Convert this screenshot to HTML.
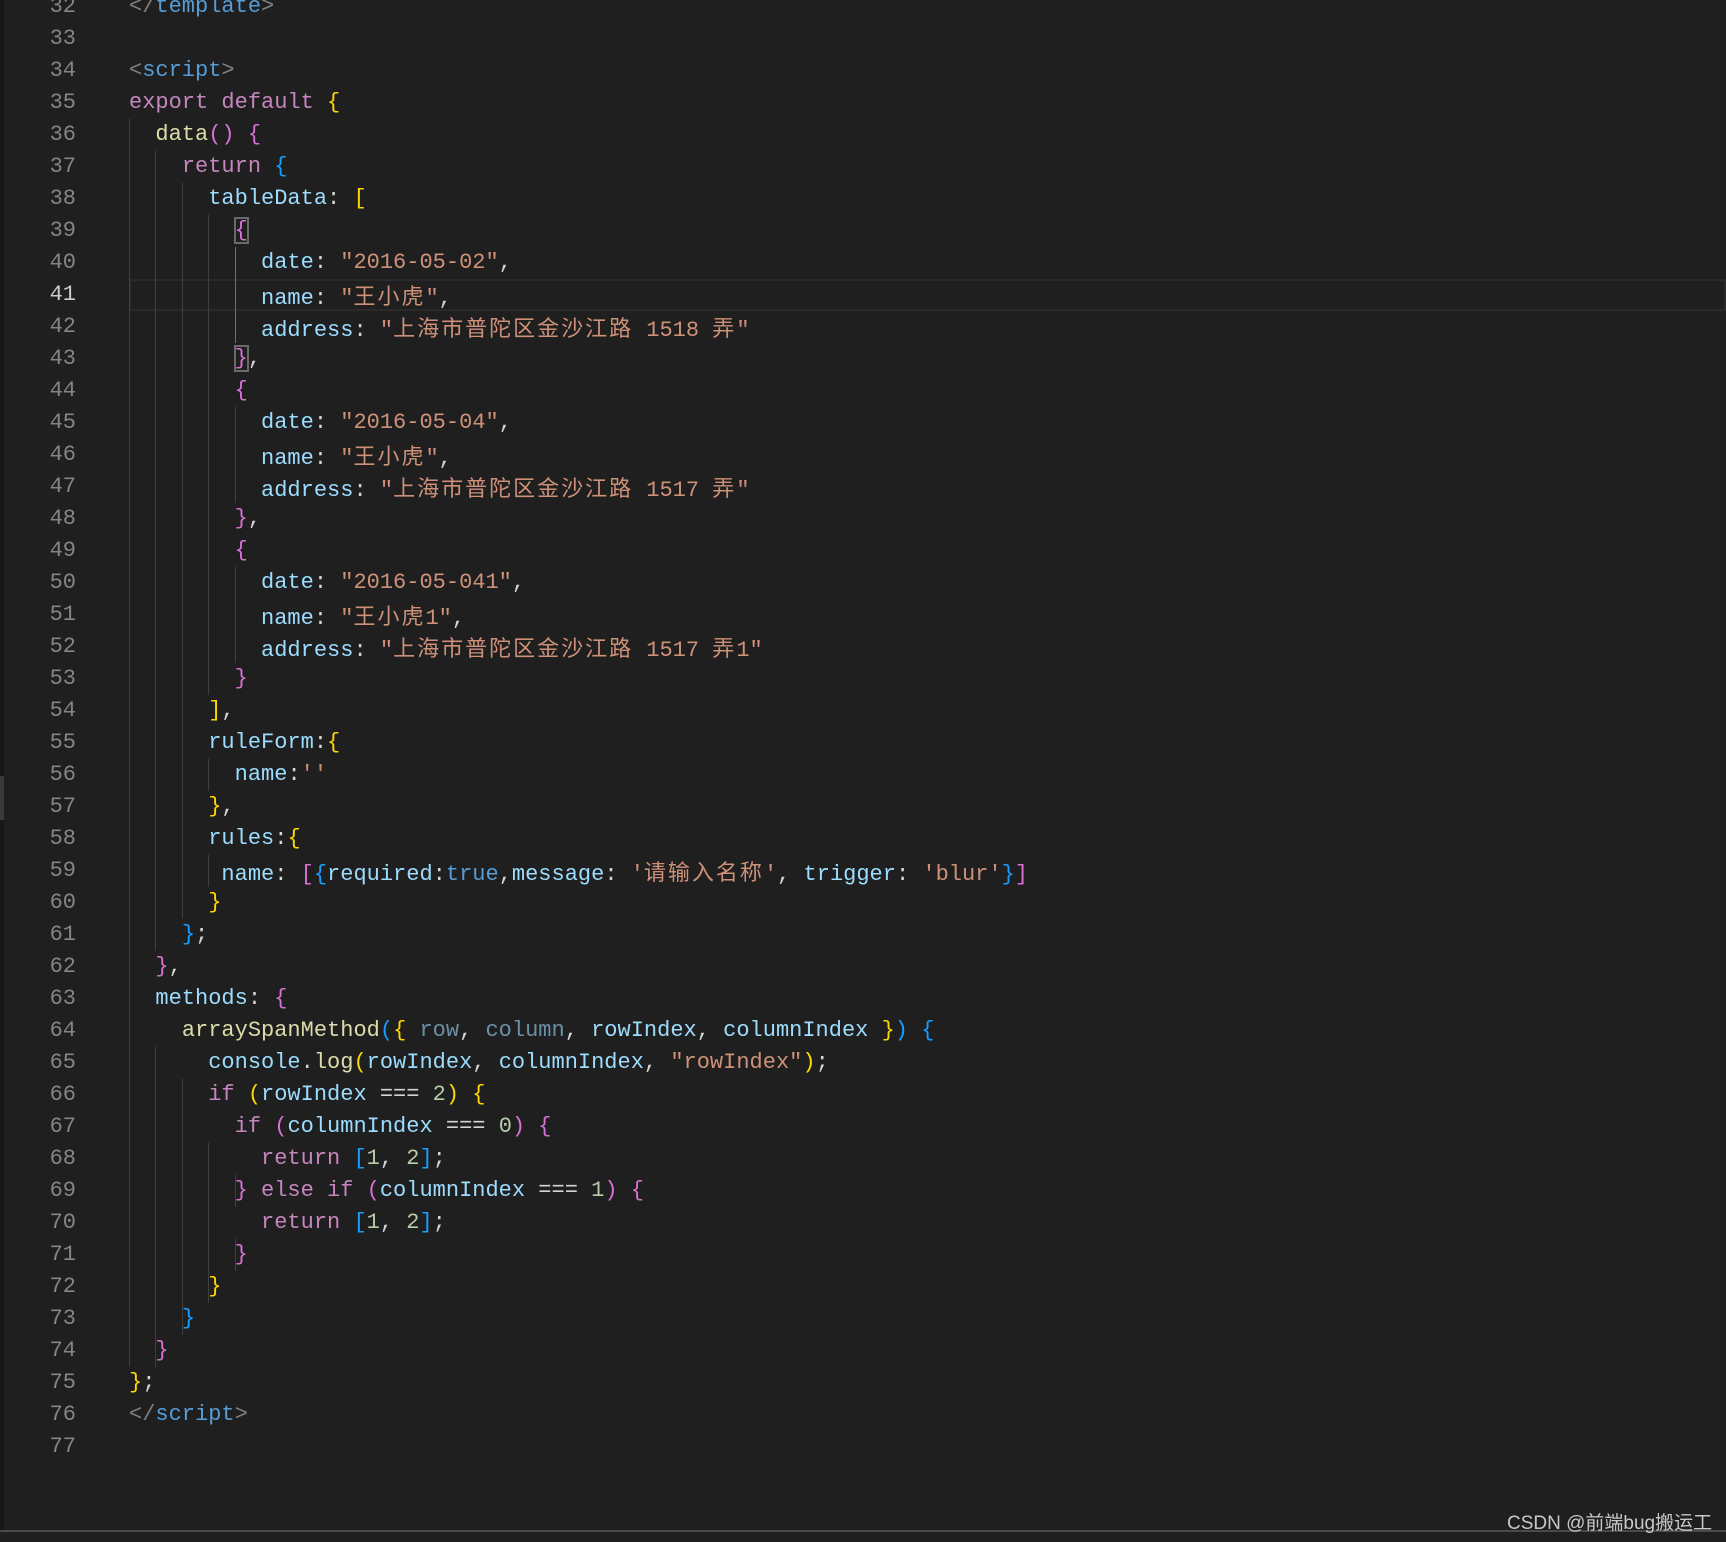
<!DOCTYPE html>
<html><head><meta charset="utf-8"><style>
html,body{margin:0;padding:0;}
body{width:1726px;height:1542px;background:#1f1f1f;position:relative;overflow:hidden;font-family:"Liberation Mono","Noto Sans CJK SC",monospace;font-size:22px;}
.ln{position:absolute;left:0;width:76px;text-align:right;height:32px;line-height:32px;color:#858585;white-space:pre;}
.ln.a{color:#cccccc;}
.cd{position:absolute;left:129px;height:32px;line-height:32px;color:#d4d4d4;white-space:pre;}
.g{position:absolute;width:1px;background:#404040;}
.g.a{background:#707070;}
.k{color:#c586c0}.t{color:#569cd6}.p{color:#808080}.v{color:#9cdcfe}.s{color:#ce9178}.f{color:#dcdcaa}.n{color:#b5cea8}
.y{color:#ffd700}.m{color:#da70d6}.b{color:#179fff}.d{color:#9cdcfe;opacity:.6}
.c{letter-spacing:2px;font-family:"Noto Sans CJK SC",sans-serif;}
.box{outline:2px solid #6a6a6a;outline-offset:-1px;}
</style></head><body>
<div style="position:absolute;left:0;top:0;width:4px;height:1530px;background:#181818"></div>
<div style="position:absolute;left:0;top:776px;width:4px;height:44px;background:#3a3a3a"></div>
<div style="position:absolute;left:129px;top:279px;right:0;height:32px;box-sizing:border-box;border:2px solid #2a2a2a"></div>
<div style="position:absolute;left:0;top:1530px;width:1726px;height:2px;background:#4a4a4a"></div>
<div style="position:absolute;left:1507px;top:1508px;font-family:'Liberation Sans','Noto Sans CJK SC',sans-serif;font-size:19px;color:#c8c8c8;white-space:pre">CSDN @前端bug搬运工</div>

<!-- guides -->
<div class="g" style="left:129px;top:119px;height:1248px"></div>
<div class="g" style="left:155px;top:151px;height:800px"></div>
<div class="g" style="left:155px;top:1047px;height:320px"></div>
<div class="g" style="left:182px;top:183px;height:736px"></div>
<div class="g" style="left:182px;top:1079px;height:256px"></div>
<div class="g" style="left:208px;top:215px;height:480px"></div>
<div class="g" style="left:208px;top:759px;height:32px"></div>
<div class="g" style="left:208px;top:855px;height:32px"></div>
<div class="g" style="left:208px;top:1143px;height:160px"></div>
<div class="g a" style="left:235px;top:247px;height:96px"></div>
<div class="g" style="left:235px;top:407px;height:96px"></div>
<div class="g" style="left:235px;top:567px;height:96px"></div>
<div class="g" style="left:235px;top:1175px;height:32px"></div>
<div class="g" style="left:235px;top:1239px;height:32px"></div>

<div class="ln" style="top:-9px">32</div><div class="cd" style="top:-9px"><span class="p">&lt;/</span><span class="t">template</span><span class="p">&gt;</span></div>
<div class="ln" style="top:23px">33</div>
<div class="ln" style="top:55px">34</div><div class="cd" style="top:55px"><span class="p">&lt;</span><span class="t">script</span><span class="p">&gt;</span></div>
<div class="ln" style="top:87px">35</div><div class="cd" style="top:87px"><span class="k">export default</span> <span class="y">{</span></div>
<div class="ln" style="top:119px">36</div><div class="cd" style="top:119px">  <span class="f">data</span><span class="m">()</span> <span class="m">{</span></div>
<div class="ln" style="top:151px">37</div><div class="cd" style="top:151px">    <span class="k">return</span> <span class="b">{</span></div>
<div class="ln" style="top:183px">38</div><div class="cd" style="top:183px">      <span class="v">tableData</span>: <span class="y">[</span></div>
<div class="ln" style="top:215px">39</div><div class="cd" style="top:215px">        <span class="m box">{</span></div>
<div class="ln" style="top:247px">40</div><div class="cd" style="top:247px">          <span class="v">date</span>: <span class="s">"2016-05-02"</span>,</div>
<div class="ln a" style="top:279px">41</div><div class="cd" style="top:279px">          <span class="v">name</span>: <span class="s">"<span class="c">王小虎</span>"</span>,</div>
<div class="ln" style="top:311px">42</div><div class="cd" style="top:311px">          <span class="v">address</span>: <span class="s">"<span class="c">上海市普陀区金沙江路</span> 1518 <span class="c">弄</span>"</span></div>
<div class="ln" style="top:343px">43</div><div class="cd" style="top:343px">        <span class="m box">}</span>,</div>
<div class="ln" style="top:375px">44</div><div class="cd" style="top:375px">        <span class="m">{</span></div>
<div class="ln" style="top:407px">45</div><div class="cd" style="top:407px">          <span class="v">date</span>: <span class="s">"2016-05-04"</span>,</div>
<div class="ln" style="top:439px">46</div><div class="cd" style="top:439px">          <span class="v">name</span>: <span class="s">"<span class="c">王小虎</span>"</span>,</div>
<div class="ln" style="top:471px">47</div><div class="cd" style="top:471px">          <span class="v">address</span>: <span class="s">"<span class="c">上海市普陀区金沙江路</span> 1517 <span class="c">弄</span>"</span></div>
<div class="ln" style="top:503px">48</div><div class="cd" style="top:503px">        <span class="m">}</span>,</div>
<div class="ln" style="top:535px">49</div><div class="cd" style="top:535px">        <span class="m">{</span></div>
<div class="ln" style="top:567px">50</div><div class="cd" style="top:567px">          <span class="v">date</span>: <span class="s">"2016-05-041"</span>,</div>
<div class="ln" style="top:599px">51</div><div class="cd" style="top:599px">          <span class="v">name</span>: <span class="s">"<span class="c">王小虎</span>1"</span>,</div>
<div class="ln" style="top:631px">52</div><div class="cd" style="top:631px">          <span class="v">address</span>: <span class="s">"<span class="c">上海市普陀区金沙江路</span> 1517 <span class="c">弄</span>1"</span></div>
<div class="ln" style="top:663px">53</div><div class="cd" style="top:663px">        <span class="m">}</span></div>
<div class="ln" style="top:695px">54</div><div class="cd" style="top:695px">      <span class="y">]</span>,</div>
<div class="ln" style="top:727px">55</div><div class="cd" style="top:727px">      <span class="v">ruleForm</span>:<span class="y">{</span></div>
<div class="ln" style="top:759px">56</div><div class="cd" style="top:759px">        <span class="v">name</span>:<span class="s">''</span></div>
<div class="ln" style="top:791px">57</div><div class="cd" style="top:791px">      <span class="y">}</span>,</div>
<div class="ln" style="top:823px">58</div><div class="cd" style="top:823px">      <span class="v">rules</span>:<span class="y">{</span></div>
<div class="ln" style="top:855px">59</div><div class="cd" style="top:855px">       <span class="v">name</span>: <span class="m">[</span><span class="b">{</span><span class="v">required</span>:<span class="t">true</span>,<span class="v">message</span>: <span class="s">'<span class="c">请输入名称</span>'</span>, <span class="v">trigger</span>: <span class="s">'blur'</span><span class="b">}</span><span class="m">]</span></div>
<div class="ln" style="top:887px">60</div><div class="cd" style="top:887px">      <span class="y">}</span></div>
<div class="ln" style="top:919px">61</div><div class="cd" style="top:919px">    <span class="b">}</span>;</div>
<div class="ln" style="top:951px">62</div><div class="cd" style="top:951px">  <span class="m">}</span>,</div>
<div class="ln" style="top:983px">63</div><div class="cd" style="top:983px">  <span class="v">methods</span>: <span class="m">{</span></div>
<div class="ln" style="top:1015px">64</div><div class="cd" style="top:1015px">    <span class="f">arraySpanMethod</span><span class="b">(</span><span class="y">{</span> <span class="d">row</span>, <span class="d">column</span>, <span class="v">rowIndex</span>, <span class="v">columnIndex</span> <span class="y">}</span><span class="b">)</span> <span class="b">{</span></div>
<div class="ln" style="top:1047px">65</div><div class="cd" style="top:1047px">      <span class="v">console</span>.<span class="f">log</span><span class="y">(</span><span class="v">rowIndex</span>, <span class="v">columnIndex</span>, <span class="s">"rowIndex"</span><span class="y">)</span>;</div>
<div class="ln" style="top:1079px">66</div><div class="cd" style="top:1079px">      <span class="k">if</span> <span class="y">(</span><span class="v">rowIndex</span> === <span class="n">2</span><span class="y">)</span> <span class="y">{</span></div>
<div class="ln" style="top:1111px">67</div><div class="cd" style="top:1111px">        <span class="k">if</span> <span class="m">(</span><span class="v">columnIndex</span> === <span class="n">0</span><span class="m">)</span> <span class="m">{</span></div>
<div class="ln" style="top:1143px">68</div><div class="cd" style="top:1143px">          <span class="k">return</span> <span class="b">[</span><span class="n">1</span>, <span class="n">2</span><span class="b">]</span>;</div>
<div class="ln" style="top:1175px">69</div><div class="cd" style="top:1175px">        <span class="m">}</span> <span class="k">else if</span> <span class="m">(</span><span class="v">columnIndex</span> === <span class="n">1</span><span class="m">)</span> <span class="m">{</span></div>
<div class="ln" style="top:1207px">70</div><div class="cd" style="top:1207px">          <span class="k">return</span> <span class="b">[</span><span class="n">1</span>, <span class="n">2</span><span class="b">]</span>;</div>
<div class="ln" style="top:1239px">71</div><div class="cd" style="top:1239px">        <span class="m">}</span></div>
<div class="ln" style="top:1271px">72</div><div class="cd" style="top:1271px">      <span class="y">}</span></div>
<div class="ln" style="top:1303px">73</div><div class="cd" style="top:1303px">    <span class="b">}</span></div>
<div class="ln" style="top:1335px">74</div><div class="cd" style="top:1335px">  <span class="m">}</span></div>
<div class="ln" style="top:1367px">75</div><div class="cd" style="top:1367px"><span class="y">}</span>;</div>
<div class="ln" style="top:1399px">76</div><div class="cd" style="top:1399px"><span class="p">&lt;/</span><span class="t">script</span><span class="p">&gt;</span></div>
<div class="ln" style="top:1431px">77</div>
</body></html>
